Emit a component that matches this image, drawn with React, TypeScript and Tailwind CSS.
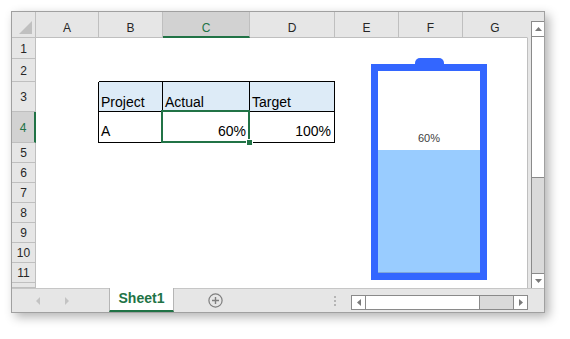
const cols = [
  { label: 'A', w: 63 },
  { label: 'B', w: 64 },
  { label: 'C', w: 87 },
  { label: 'D', w: 85 },
  { label: 'E', w: 64 },
  { label: 'F', w: 64 },
  { label: 'G', w: 65 },
]

const rows = [
  { n: 1, h: 21 },
  { n: 2, h: 23 },
  { n: 3, h: 30 },
  { n: 4, h: 31 },
  { n: 5, h: 20 },
  { n: 6, h: 20 },
  { n: 7, h: 20 },
  { n: 8, h: 20 },
  { n: 9, h: 20 },
  { n: 10, h: 20 },
  { n: 11, h: 20 },
  { n: 12, h: 5 },
]

type Cell = { text?: string; right?: boolean; cls: string }

function cellFor(col: string, row: number): Cell {
  const inTable = ['B', 'C', 'D'].includes(col) && (row === 3 || row === 4)
  if (inTable) {
    const head = row === 3
    const values: Record<string, string> = {
      B3: 'Project',
      C3: 'Actual',
      D3: 'Target',
      B4: 'A',
      C4: '60%',
      D4: '100%',
    }
    return {
      text: values[col + row],
      right: !head && col !== 'B',
      cls: `border-r border-b border-black ${head ? 'bg-[#ddebf7]' : 'bg-white'}`,
    }
  }
  if (col === 'A' && (row === 3 || row === 4)) return { cls: 'border-r border-black' }
  if (row === 2 && ['B', 'C', 'D'].includes(col)) return { cls: 'border-b border-black' }
  return { cls: '' }
}

function Battery() {
  return (
    <div className="absolute left-[359px] top-[52px] w-[116px] h-[216px]">
      <div className="absolute left-[44px] -top-[6px] w-[29px] h-[8px] rounded-t-[5px] bg-[#3366ff]" />
      <div className="relative flex flex-col w-full h-full border-[7px] border-[#3366ff] bg-white">
        <div className="flex flex-1 items-end justify-center pb-[5px] text-[11px] leading-[13px] text-[#404040]">
          60%
        </div>
        <div className="h-[123px] bg-[#99ccff] border-b border-[#7fa6d9]" />
      </div>
    </div>
  )
}

function VScroll() {
  return (
    <div className="w-[16px] bg-[#e6e6e6] pl-[3px] pt-[9px]">
      <div className="flex flex-col h-[267px] border-l border-t border-[#8a8a8a] bg-[#dadada]">
        <div className="flex h-[15px] items-center justify-center border-b border-[#8a8a8a] bg-white">
          <svg width="7" height="4" viewBox="0 0 7 4"><path d="M0 4 L3.5 0 L7 4 Z" fill="#7a7a7a" /></svg>
        </div>
        <div className="h-[141px] border-b border-[#8a8a8a] bg-white" />
        <div className="flex-1" />
        <div className="flex h-[15px] items-center justify-center border-t border-[#8a8a8a] bg-white">
          <svg width="7" height="4" viewBox="0 0 7 4"><path d="M0 0 L3.5 4 L7 0 Z" fill="#7a7a7a" /></svg>
        </div>
      </div>
    </div>
  )
}

function TabBar() {
  return (
    <div className="flex h-[24px] border-t border-[#c6c6c6] bg-[#e6e6e6]">
      <div className="flex w-[97px] items-center pl-[24px] gap-[25px]">
        <svg width="4" height="8" viewBox="0 0 4 8"><path d="M4 0 L0 4 L4 8 Z" fill="#c3c3c3" /></svg>
        <svg width="4" height="8" viewBox="0 0 4 8"><path d="M0 0 L4 4 L0 8 Z" fill="#c3c3c3" /></svg>
      </div>
      <div className="-mt-px flex w-[65px] items-center justify-center border-x border-b-2 border-x-[#b5b5b5] border-b-[#217346] bg-white pb-[1px] text-[14px] font-bold text-[#217346]">
        Sheet1
      </div>
      <div className="ml-[34px] flex items-center">
        <svg width="15" height="15" viewBox="0 0 15 15">
          <circle cx="7.5" cy="7.5" r="6.6" fill="none" stroke="#7f7f7f" strokeWidth="1.2" />
          <path d="M7.5 4 V11 M4 7.5 H11" stroke="#7f7f7f" strokeWidth="1.4" />
        </svg>
      </div>
      <div className="ml-[111px] flex flex-col justify-center gap-[2px]">
        <div className="w-[2px] h-[2px] bg-[#b5b5b5]" />
        <div className="w-[2px] h-[2px] bg-[#b5b5b5]" />
        <div className="w-[2px] h-[2px] bg-[#b5b5b5]" />
      </div>
      <div className="ml-[15px] mt-[6px] flex h-[15px] w-[177px] border border-[#8a8a8a] bg-[#dadada]">
        <div className="flex w-[14px] items-center justify-center border-r border-[#8a8a8a] bg-white">
          <svg width="4" height="7" viewBox="0 0 4 7"><path d="M4 0 L0 3.5 L4 7 Z" fill="#7a7a7a" /></svg>
        </div>
        <div className="w-[114px] border-r border-[#8a8a8a] bg-white" />
        <div className="flex-1" />
        <div className="flex w-[14px] items-center justify-center border-l border-[#8a8a8a] bg-white">
          <svg width="4" height="7" viewBox="0 0 4 7"><path d="M0 0 L4 3.5 L0 7 Z" fill="#7a7a7a" /></svg>
        </div>
      </div>
    </div>
  )
}

export default function App() {
  return (
    <div
      className="w-[570px] h-[339px] bg-white pl-[11px] pt-[11px]"
      style={{ fontFamily: '"Liberation Sans", Arial, sans-serif' }}
    >
      <div className="flex flex-col w-[534px] h-[302px] border border-[#a0a0a0] bg-white shadow-[4px_4px_10px_rgba(0,0,0,0.3)]">
        <div className="flex">
          <div className="relative">
            {/* column headers */}
            <div className="flex h-[26px] bg-[#e6e6e6] text-[12px] text-[#262626]">
              <div className="relative w-[24px] border-r border-b border-[#bfbfbf]">
                <svg className="absolute right-[3px] bottom-[3px]" width="13" height="13" viewBox="0 0 13 13">
                  <path d="M13 0 L13 13 L0 13 Z" fill="#c0c0c0" />
                </svg>
              </div>
              {cols.map((c) => {
                const sel = c.label === 'C'
                return (
                  <div
                    key={c.label}
                    style={{ width: c.w }}
                    className={`flex items-center justify-center pt-[7px] ${
                      sel
                        ? 'bg-[#d2d2d2] text-[#217346] border-b-2 border-b-[#217346] border-r border-r-[#bfbfbf]'
                        : 'border-b border-r border-[#bfbfbf]'
                    } ${c.label === 'G' ? 'border-r-[#e6e6e6]' : ''}`}
                  >
                    {c.label}
                  </div>
                )
              })}
            </div>
            {/* rows */}
            {rows.map((r) => {
              const sel = r.n === 4
              return (
                <div key={r.n} className="flex" style={{ height: r.h }}>
                  <div
                    className={`flex w-[24px] items-center justify-center pt-[1px] text-[12px] ${
                      sel
                        ? 'bg-[#d2d2d2] text-[#217346] border-r-2 border-r-[#217346] border-b border-b-[#bfbfbf]'
                        : 'bg-[#e6e6e6] text-[#262626] border-r border-b border-[#bfbfbf]'
                    }`}
                  >
                    {r.n < 12 ? r.n : ''}
                  </div>
                  {cols.map((c) => {
                    const cell = cellFor(c.label, r.n)
                    return (
                      <div
                        key={c.label}
                        style={{ width: c.w }}
                        className={`flex items-end text-[14px] leading-[16px] text-black ${
                          r.n === 4 ? 'pb-[3px]' : 'pb-[1px]'
                        } ${cell.right ? 'justify-end pr-[3px]' : 'pl-[2px]'} ${cell.cls} ${
                          c.label === 'G' ? 'border-r border-r-[#bfbfbf]' : ''
                        }`}
                      >
                        {cell.text}
                      </div>
                    )
                  })}
                </div>
              )
            })}
            {/* selection */}
            <div className="absolute left-[149px] top-[98px] w-[89px] h-[33px] border-2 border-[#217346]" />
            <div className="absolute left-[234px] top-[127px] w-[7px] h-[7px] border border-white bg-[#217346]" />
            <Battery />
          </div>
          <VScroll />
        </div>
        <TabBar />
      </div>
    </div>
  )
}
